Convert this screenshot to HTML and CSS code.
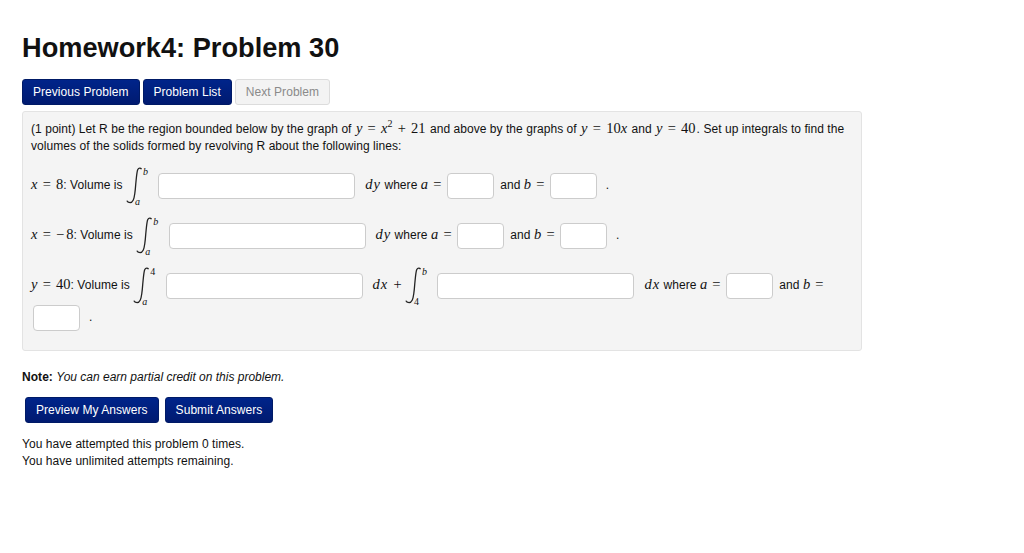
FILE: index.html
```html
<!DOCTYPE html>
<html lang="en">
<head>
    <meta charset="UTF-8">
    <title>Homework4: Problem 30</title>
    <link rel="stylesheet" href="styles.css">
</head>
<body>
    <h1>Homework4: Problem 30</h1>

    <div class="nav">
        <a class="btn">Previous Problem</a>
        <a class="btn">Problem List</a>
        <a class="btn off">Next Problem</a>
    </div>

    <div class="problem">
        <p class="intro">(1 point) Let R be the region bounded below by the graph of <span class="m"><i>y</i> = <i>x</i><sup>2</sup> + 21</span> and above by the graphs of <span class="m"><i>y</i> = 10<i>x</i></span> and <span class="m"><i>y</i> = 40</span>. Set up integrals to find the volumes of the solids formed by revolving R about the following lines:</p>

        <div class="line first">
            <span class="m"><i>x</i> = 8</span>: Volume is
            <span class="int"><svg width="16" height="37" viewBox="0 0 16 37"><path d="M15.500 2.200c-.8-1.400-2.800-1.500-3.700.3-1 2-1.400 8-2 14-.5 7-1.100 13.500-2.500 16.500-1.100 2.300-3.200 3-5 2.200-1-.4-1.200-1.100-1.300-1.500" fill="none" stroke="#222" stroke-width="1.300"/></svg><span class="lim"><i>b</i><i class="low">a</i></span></span>
            <input class="wide" type="text"><span class="m d"><i class="sp">dy</i></span> where <span class="m"><i>a</i> =</span>
            <input class="small" type="text"> and <span class="m"><i>b</i> =</span>
            <input class="small" type="text"><span class="dot">.</span>
        </div>

        <div class="line">
            <span class="m"><i>x</i> = <span class="minus">−</span>8</span>: Volume is
            <span class="int"><svg width="16" height="37" viewBox="0 0 16 37"><path d="M15.500 2.200c-.8-1.400-2.800-1.500-3.700.3-1 2-1.400 8-2 14-.5 7-1.100 13.500-2.500 16.500-1.100 2.300-3.200 3-5 2.200-1-.4-1.200-1.100-1.300-1.500" fill="none" stroke="#222" stroke-width="1.300"/></svg><span class="lim"><i>b</i><i class="low">a</i></span></span>
            <input class="wide" type="text"><span class="m d"><i class="sp">dy</i></span> where <span class="m"><i>a</i> =</span>
            <input class="small" type="text"> and <span class="m"><i>b</i> =</span>
            <input class="small" type="text"><span class="dot">.</span>
        </div>

        <div class="line">
            <span class="m"><i>y</i> = 40</span>: Volume is
            <span class="int"><svg width="16" height="37" viewBox="0 0 16 37"><path d="M15.500 2.200c-.8-1.400-2.800-1.500-3.700.3-1 2-1.400 8-2 14-.5 7-1.100 13.500-2.500 16.500-1.100 2.300-3.200 3-5 2.200-1-.4-1.200-1.100-1.300-1.500" fill="none" stroke="#222" stroke-width="1.300"/></svg><span class="lim"><b>4</b><i class="low">a</i></span></span>
            <input class="wide" type="text"><span class="m d"><i class="sp">dx</i> +</span>
            <span class="int"><svg width="16" height="37" viewBox="0 0 16 37"><path d="M15.500 2.200c-.8-1.400-2.800-1.500-3.700.3-1 2-1.400 8-2 14-.5 7-1.100 13.500-2.500 16.500-1.100 2.300-3.200 3-5 2.200-1-.4-1.200-1.100-1.300-1.500" fill="none" stroke="#222" stroke-width="1.300"/></svg><span class="lim"><i>b</i><b class="low">4</b></span></span>
            <input class="wide" type="text"><span class="m d"><i class="sp">dx</i></span> where <span class="m"><i>a</i> =</span>
            <input class="small" type="text"> and <span class="m"><i>b</i> =</span>
            <input class="small" type="text"><span class="dot">.</span>
        </div>
    </div>

    <p class="note"><b>Note:</b> <em>You can earn partial credit on this problem.</em></p>

    <div class="actions">
        <a class="btn">Preview My Answers</a>
        <a class="btn">Submit Answers</a>
    </div>

    <p class="attempts">You have attempted this problem 0 times.<br>You have unlimited attempts remaining.</p>
</body>
</html>
```

FILE: styles.css
```css
body {
    margin: 0;
    padding: 0 22px;
    background-color: white;
    color: #111;
    font-family: "Liberation Sans", Arial, sans-serif;
    font-size: 12px;
    letter-spacing: 0.05px;
    line-height: 17px;
}

h1 {
    margin: 0;
    padding-top: 31px;
    font-size: 27.2px;
    line-height: 33px;
    font-weight: bold;
    letter-spacing: 0;
}

.nav {
    display: flex;
    gap: 3px;
    margin-top: 15px;
}

.btn {
    display: block;
    padding: 4px 10px;
    border: 1px solid #001a66;
    border-radius: 3px;
    background: linear-gradient(#00248a, #001a70);
    color: white;
    font-size: 12px;
    line-height: 16px;
}

.btn.off {
    border-color: #dcdcdc;
    background: #f3f3f3;
    color: #8a8a8a;
}

.problem {
    box-sizing: border-box;
    width: 840px;
    height: 240px;
    margin-top: 6px;
    padding: 8px 8px;
    border: 1px solid #e3e3e3;
    border-radius: 3px;
    background-color: #f4f4f4;
}

.intro {
    margin: 0;
}

.intro .m {
    margin: 0 1px;
}

.m {
    font-family: "Liberation Serif", serif;
    font-size: 14.5px;
    letter-spacing: 0;
    word-spacing: 1.6px;
}

.m sup {
    font-size: 10px;
    line-height: 0;
}

.minus {
    margin-right: 2px;
}

.d {
    margin-left: 10px;
}

.sp {
    letter-spacing: 1px;
}

.line {
    line-height: 26px;
    margin-top: 13px;
}

.line.first {
    margin-top: 12px;
}

.int {
    display: inline-flex;
    vertical-align: middle;
    height: 37px;
}

.lim {
    display: flex;
    flex-direction: column;
    justify-content: space-between;
    width: 12px;
    height: 39px;
    padding-left: 1px;
    font-family: "Liberation Serif", serif;
    font-size: 10px;
    line-height: 9px;
}

.lim b {
    font-weight: normal;
}

.low {
    margin-left: -8px;
}

input {
    box-sizing: border-box;
    height: 26px;
    margin: 0;
    padding: 0 6px;
    border: 1px solid #ccc;
    border-radius: 4px;
    background: white;
    vertical-align: middle;
}

input.wide {
    width: 197px;
}

input.small {
    width: 47px;
    margin: 0 3px 0 2px;
}

.dot {
    margin-left: 6px;
}

.note {
    margin: 18px 0 0;
}

.note em {
    letter-spacing: 0;
}

.actions {
    display: flex;
    gap: 6px;
    margin: 11px 0 0 3px;
}

.attempts {
    margin: 13px 0 0;
}
```
